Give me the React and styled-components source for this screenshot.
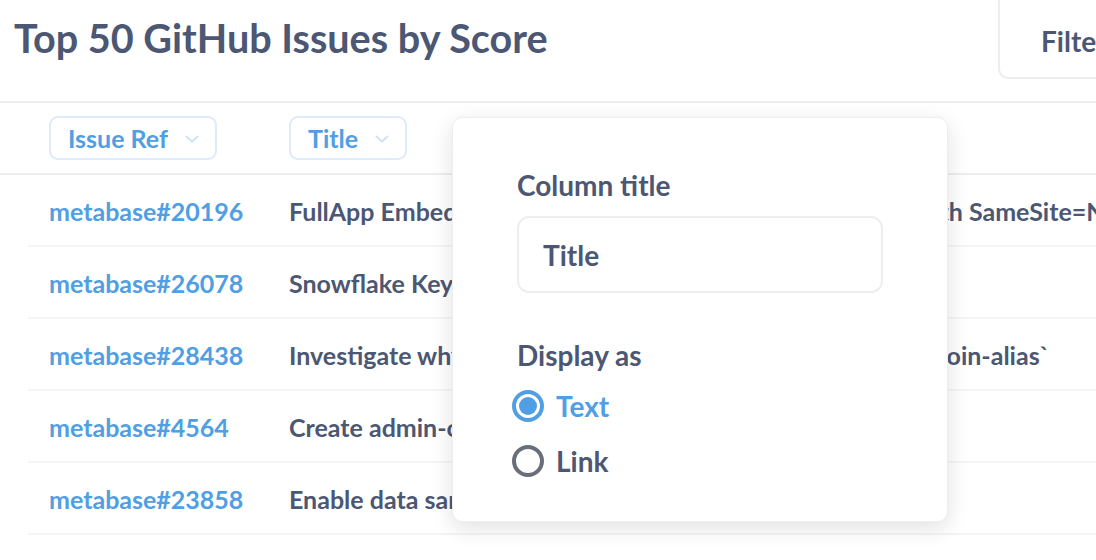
import React from "react";
import styled, { createGlobalStyle } from "styled-components";

const rows = [
  {
    ref: "metabase#20196",
    title:
      "FullApp Embedding does not work in Safari and Chrome with SameSite=None",
  },
  { ref: "metabase#26078", title: "Snowflake Key Pair authentication" },
  {
    ref: "metabase#28438",
    title: "Investigate why nested query sometimes fails with wrong `join-alias`",
  },
  { ref: "metabase#4564", title: "Create admin-only dashboards" },
  { ref: "metabase#23858", title: "Enable data sandboxing for SQL" },
];

function Chevron() {
  return (
    <svg width="14" height="8" viewBox="0 0 14 8" fill="none">
      <path
        d="M1.5 1.5L7 6.5L12.5 1.5"
        stroke="#cfe3f6"
        strokeWidth="2"
        strokeLinecap="round"
        strokeLinejoin="round"
      />
    </svg>
  );
}

function App() {
  return (
    <Page>
      <GlobalStyle />
      <Header>
        <Title>Top 50 GitHub Issues by Score</Title>
        <FilterButton>Filter</FilterButton>
      </Header>
      <HeadRow>
        <HeadCell>
          <Pill>
            Issue Ref
            <Chevron />
          </Pill>
        </HeadCell>
        <HeadCell>
          <Pill>
            Title
            <Chevron />
          </Pill>
        </HeadCell>
      </HeadRow>
      {rows.map((row) => (
        <Row key={row.ref}>
          <RefCell>{row.ref}</RefCell>
          <TitleCell>{row.title}</TitleCell>
        </Row>
      ))}
      <Popover>
        <Label>Column title</Label>
        <Input defaultValue="Title" />
        <Label $spaced>Display as</Label>
        <RadioList>
          <RadioRow $checked>
            <Radio $checked />
            Text
          </RadioRow>
          <RadioRow>
            <Radio />
            Link
          </RadioRow>
        </RadioList>
      </Popover>
    </Page>
  );
}

const GlobalStyle = createGlobalStyle`
  * { box-sizing: border-box; }
  body {
    margin: 0;
    background: #fff;
    font-family: Lato, "Noto Sans", sans-serif;
    color: #4c5773;
    overflow: hidden;
  }
`;
const Page = styled.div`
  position: relative;
  width: 100%;
  height: 560px;
  overflow: hidden;
  background: #fff;
`;
const Header = styled.div`
  display: flex;
  align-items: flex-start;
  justify-content: space-between;
  height: 103px;
  padding-left: 14px;
  border-bottom: 2px solid #eeeeee;
`;
const Title = styled.h1`
  margin: 0;
  padding-top: 14px;
  font-size: 39.6px;
  font-weight: 700;
  line-height: 48px;
  color: #4c5773;
  white-space: nowrap;
`;
const FilterButton = styled.div`
  flex: none;
  width: 140px;
  height: 92px;
  margin-top: -13px;
  margin-right: -42px;
  padding: 35px 0 0 41px;
  border: 2px solid #eeecec;
  border-radius: 10px;
  font-size: 28px;
  font-weight: 700;
  line-height: 34px;
  color: #4c5773;
`;
const HeadRow = styled.div`
  display: grid;
  grid-template-columns: 240px 1fr;
  height: 72px;
  padding-left: 28px;
  border-bottom: 2px solid #eeeeee;
`;
const HeadCell = styled.div`
  display: flex;
  align-items: center;
  padding-left: 21px;
`;
const Pill = styled.div`
  display: flex;
  align-items: center;
  gap: 17px;
  height: 44px;
  padding: 0 16px 0 17px;
  border: 2px solid #deecf9;
  border-radius: 9px;
  font-size: 25px;
  font-weight: 700;
  color: #509ee3;
  svg {
    margin-top: 2px;
  }
`;
const Row = styled.div`
  display: grid;
  grid-template-columns: 240px 1fr;
  height: 72px;
  margin-left: 28px;
  border-bottom: 2px solid #f4f4f4;
`;
const RefCell = styled.div`
  display: flex;
  align-items: center;
  padding: 2px 0 0 21px;
  font-size: 25px;
  font-weight: 700;
  color: #509ee3;
  white-space: nowrap;
`;
const TitleCell = styled(RefCell)`
  color: #4c5773;
  overflow: hidden;
`;
const Popover = styled.div`
  position: absolute;
  left: 452px;
  top: 117px;
  width: 496px;
  height: 405px;
  padding: 50px 64px 0;
  background: #fff;
  border: 1px solid #eeeeee;
  border-radius: 10px;
  box-shadow: 0 6px 22px rgba(0, 0, 0, 0.12);
`;
const Label = styled.div`
  margin-top: ${(p) => (p.$spaced ? "45px" : "0")};
  font-size: 28px;
  font-weight: 700;
  line-height: 34px;
  color: #4c5773;
`;
const Input = styled.input`
  display: block;
  width: 100%;
  height: 77px;
  margin-top: 14px;
  padding: 0 24px;
  border: 2px solid #eeeeee;
  border-radius: 12px;
  outline: none;
  font-family: inherit;
  font-size: 28px;
  font-weight: 700;
  color: #4c5773;
`;
const RadioList = styled.div`
  display: flex;
  flex-direction: column;
  gap: 23px;
  margin-top: 18px;
`;
const RadioRow = styled.div`
  display: flex;
  align-items: center;
  gap: 12px;
  height: 32px;
  margin-left: -5px;
  font-size: 28px;
  font-weight: 700;
  color: ${(p) => (p.$checked ? "#509ee3" : "#4c5773")};
`;
const Radio = styled.span`
  position: relative;
  flex: none;
  width: 32px;
  height: 32px;
  border: 4px solid ${(p) => (p.$checked ? "#509ee3" : "#696e7b")};
  border-radius: 50%;
  &::after {
    content: "";
    display: ${(p) => (p.$checked ? "block" : "none")};
    position: absolute;
    inset: 3px;
    border-radius: 50%;
    background: #509ee3;
  }
`;

export default App;
